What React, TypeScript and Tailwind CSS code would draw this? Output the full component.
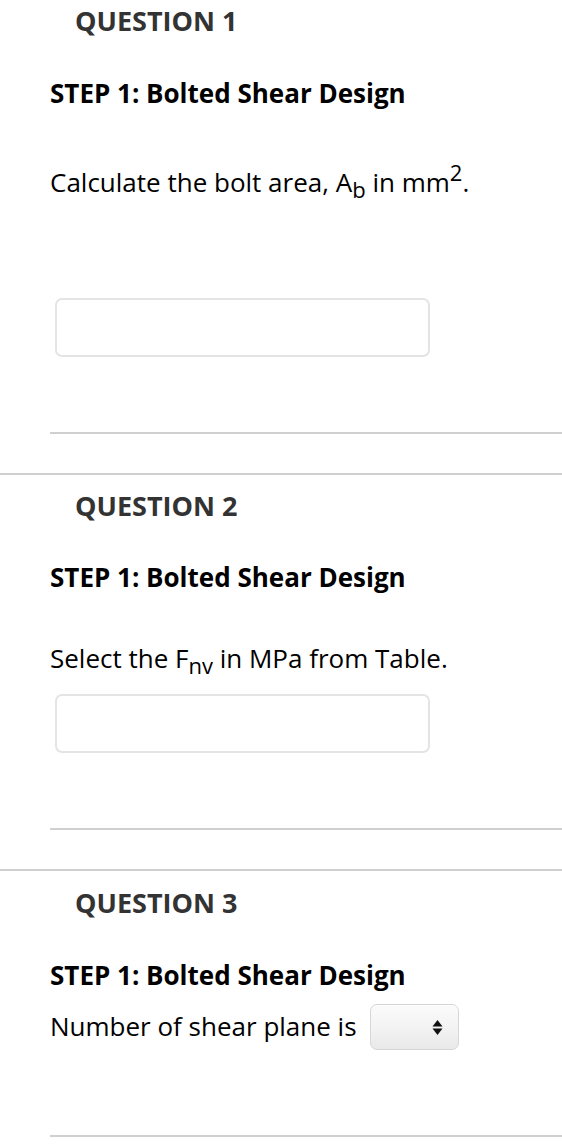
const font = { fontFamily: '"Open Sans", "Liberation Sans", sans-serif' };

const Heading = ({ n }: { n: number }) => (
  <h2 className="ml-[75px] text-[27px] font-bold text-[#333] leading-none">QUESTION {n}</h2>
);

const Step = () => (
  <h3 className="text-[26px] font-bold text-black leading-none">STEP 1: Bolted Shear Design</h3>
);

const TextBox = () => (
  <div className="ml-[5px] w-[375px] h-[59px] rounded-[7px] border-2 border-[#e4e4e4] bg-white" />
);

export default function App() {
  return (
    <div className="w-[562px] bg-white text-black" style={font}>
      <section className="pt-[7px]">
        <Heading n={1} />
        <div className="ml-[50px]">
          <div className="mt-[46px]">
            <Step />
          </div>
          <p className="mt-[63px] text-[26px] leading-none">
            Calculate the bolt area, A<sub className="text-[22px]">b</sub> in mm
            <sup className="text-[22px]">2</sup>.
          </p>
          <div className="mt-[103px]">
            <TextBox />
          </div>
          <div className="mt-[75px] h-[2px] bg-[#d0d0d0]" />
        </div>
        <div className="mt-[39px] h-[2px] bg-[#d0d0d0]" />
      </section>

      <section className="pt-[17px]">
        <Heading n={2} />
        <div className="ml-[50px]">
          <div className="mt-[45px]">
            <Step />
          </div>
          <p className="mt-[55px] text-[26px] leading-none">
            Select the F<sub className="text-[22px]">nv</sub> in MPa from Table.
          </p>
          <div className="mt-[23px]">
            <TextBox />
          </div>
          <div className="mt-[75px] h-[2px] bg-[#d0d0d0]" />
        </div>
        <div className="mt-[39px] h-[2px] bg-[#d0d0d0]" />
      </section>

      <section className="pt-[18px] pb-[10px]">
        <Heading n={3} />
        <div className="ml-[50px]">
          <div className="mt-[46px]">
            <Step />
          </div>
          <div className="mt-[16px] flex items-start">
            <span className="mt-[9px] text-[26px] leading-none">Number of shear plane is</span>
            <div className="ml-[13px] w-[89px] h-[46px] rounded-[7px] border border-[#d6d6d6] bg-gradient-to-b from-[#fbfbfb] via-[#f3f3f3] to-[#e9e9e9] flex items-center justify-end pr-[15px] shadow-[inset_0_1px_1px_rgba(255,255,255,0.9)]">
              <svg width="11" height="17" viewBox="0 0 11 17">
                <path d="M5.5 1 L10.5 7.5 L0.5 7.5 Z" fill="#111" />
                <path d="M5.5 16 L10.5 9.5 L0.5 9.5 Z" fill="#111" />
              </svg>
            </div>
          </div>
          <div className="mt-[85px] h-[2px] bg-[#d0d0d0]" />
        </div>
      </section>
    </div>
  );
}
